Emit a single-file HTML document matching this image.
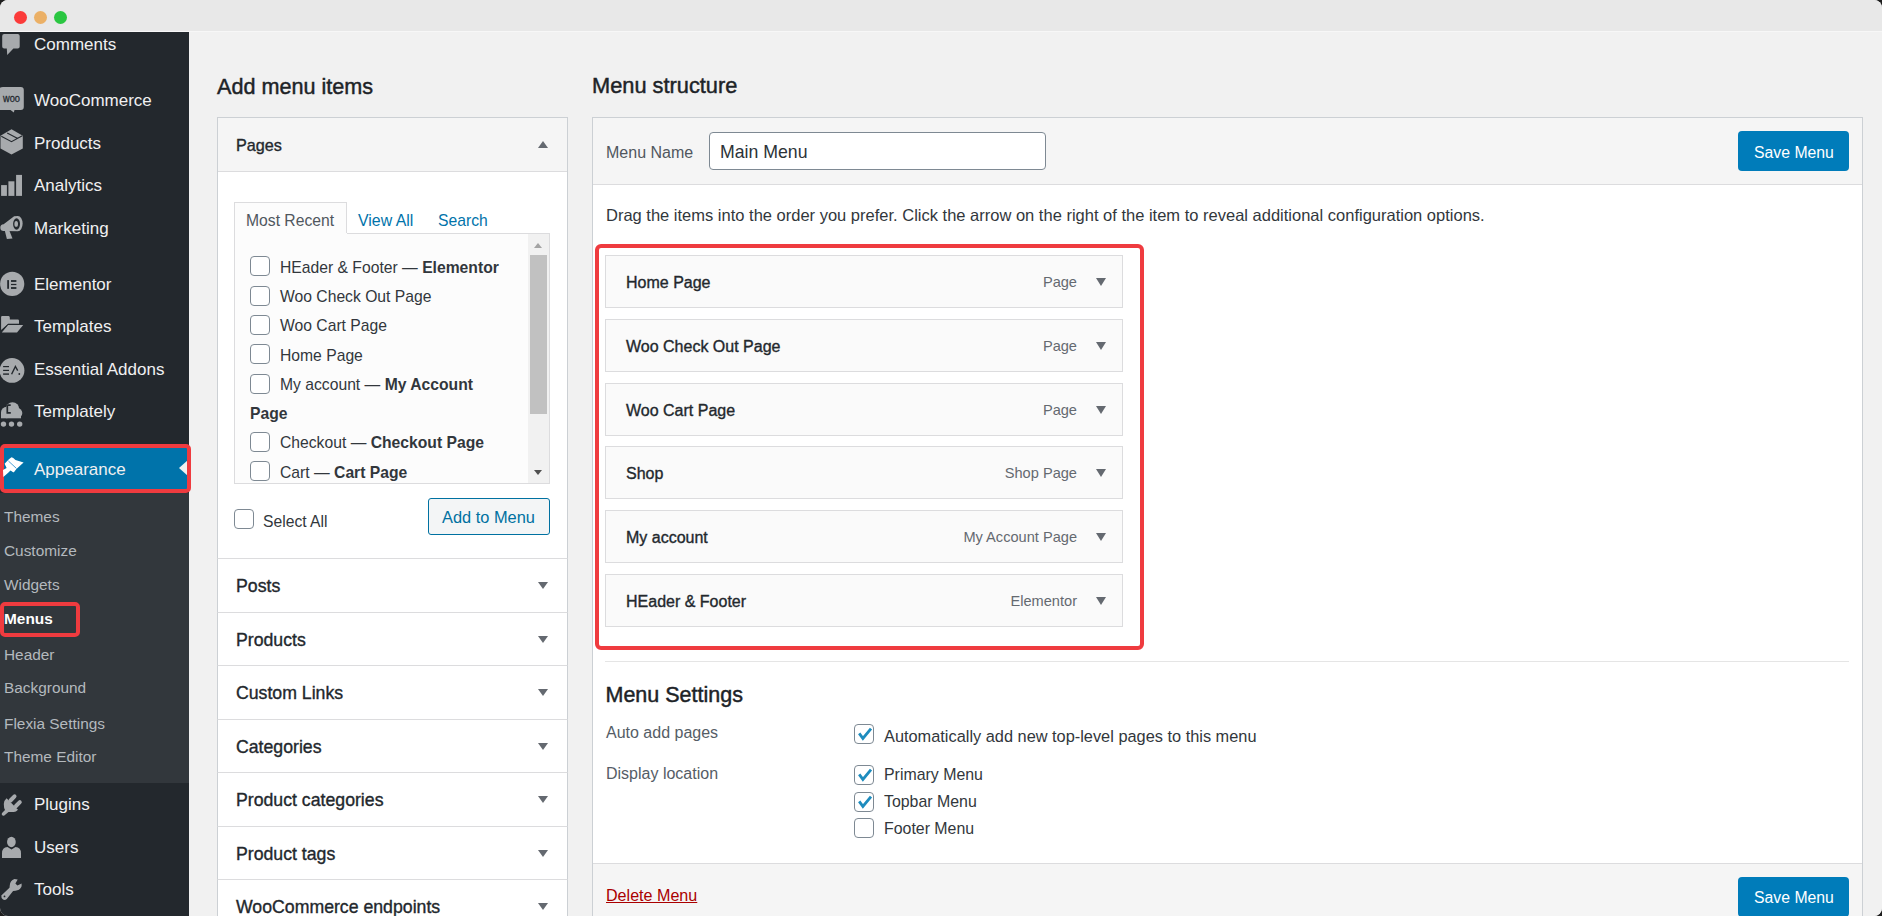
<!DOCTYPE html>
<html><head><meta charset="utf-8"><title>Menus</title>
<style>
html,body{margin:0;padding:0;}
body{width:1882px;height:916px;overflow:hidden;position:relative;background:#1e1e1e;font-family:"Liberation Sans",sans-serif;}
#win{position:absolute;left:0;top:0;width:1882px;height:916px;overflow:hidden;border-radius:8px;background:#f1f1f1;}
.r{position:absolute;box-sizing:border-box;}
.t{position:absolute;line-height:1;white-space:nowrap;}
b{font-weight:700;}
</style></head><body><div id="win">
<div class="r" style="left:0px;top:0px;width:1882px;height:32px;background:#e8e8e8;"></div>
<div class="r" style="left:0px;top:31px;width:1882px;height:1px;background:#f7f7f7;"></div>
<div class="r" style="left:13.5px;top:10.5px;width:13px;height:13px;background:#fb3b3a;border-radius:50%;"></div>
<div class="r" style="left:33.5px;top:10.5px;width:13px;height:13px;background:#ebb066;border-radius:50%;"></div>
<div class="r" style="left:53.5px;top:10.5px;width:13px;height:13px;background:#2ac641;border-radius:50%;"></div>
<div class="r" style="left:189px;top:32px;width:1693px;height:884px;background:#f1f1f1;"></div>
<div class="r" style="left:0px;top:32px;width:189px;height:884px;background:#23282d;"></div>
<div class="r" style="left:0px;top:493px;width:189px;height:290px;background:#32373c;"></div>
<div class="r" style="left:0px;top:448px;width:189px;height:41px;background:#0073aa;"></div>
<div class="r" style="left:179px;top:460px;width:0;height:0;border-top:8px solid transparent;border-bottom:8px solid transparent;border-right:9px solid #f1f1f1;"></div>
<div class="r" style="left:0px;top:444px;width:191px;height:49px;border:4px solid #ef3b3f;border-radius:5px;"></div>
<div class="r" style="left:0px;top:602px;width:80px;height:35px;border:4px solid #ef3b3f;border-radius:5px;"></div>
<svg class="r" style="left:0;top:0" width="189" height="916" viewBox="0 0 189 916">
<g fill="#a7aaad">
<path d="M4.2,34 H17.7 Q19.7,34 19.7,36 V46.4 Q19.7,48.4 17.7,48.4 H13.4 L7.2,55 L6.8,48.4 H4.2 Q2.2,48.4 2.2,46.4 V36 Q2.2,34 4.2,34 Z"/>
<path d="M3,87.1 H20.8 Q23.8,87.1 23.8,90.1 V106.9 Q23.8,109.9 20.8,109.9 H14.5 L13.8,112.5 L10.5,109.9 H-1 V90.1 Q-1,87.1 3,87.1 Z"/>
<path d="M11.5,129.3 L22.8,135.8 V148.6 L11.5,154.5 L0.5,148.6 V135.8 Z"/>
<rect x="1.1" y="185.1" width="5.8" height="10.8"/><rect x="8.4" y="181.3" width="6" height="14.6"/><rect x="16.1" y="174.9" width="5.9" height="21"/>
<path d="M3.6,224.2 L14.1,216.3 L17.9,215.9 A4.75,7.7 0 0 1 17.9,231.3 L3.8,231 A3.4,3.4 0 0 1 3.6,224.2 Z"/>
<path d="M4.9,231 L9.5,231 L12.5,238.6 L6.9,238.9 Z"/>
<circle cx="12.2" cy="283.9" r="12.1"/>
<path d="M1.1,317 Q1.1,315.9 2.2,315.9 H8.6 Q9.8,316 9.8,317.5 V319.5 H17.8 Q19,319.5 19,320.8 V324.1 H8 L1.1,330 Z"/>
<path d="M1.8,332.6 L8,324.9 H23.2 L17,332.6 Z"/>
<circle cx="12" cy="370.4" r="12.4"/>
<circle cx="6.7" cy="412.5" r="5.7"/><circle cx="12.5" cy="409" r="6.8"/><circle cx="17.2" cy="413" r="5.1"/><rect x="1" y="412.5" width="20" height="5.8"/>
<circle cx="3.5" cy="424.1" r="2.7"/><circle cx="11.5" cy="424.1" r="2.7"/><circle cx="19.7" cy="424.1" r="2.7"/>
<path d="M6.6,798.2 L18,809.7 Q16,812 13.8,812 L8.5,812 L4,815.8 Q2.5,816 1.8,814.8 Q1.5,813.5 2.5,812.5 L5,810 Q3.8,808 3.8,804 Q3.8,800.5 6.6,798.2 Z"/>
<ellipse cx="11.4" cy="841.9" rx="4.35" ry="5.25"/>
<path d="M2,857.9 V853.5 Q2,847 7.5,847 L11.5,849.5 L15.5,847 Q21,847 21,853.5 V857.9 Z"/>
<path d="M14.4,878.9 L17.7,879.6 L15.4,883.5 L17.4,885.5 L21.6,883.5 Q21.8,886 21.3,887.1 Q19.5,890.5 15.5,890.8 L13.1,891 L6.8,898.9 Q5,900.5 3,899.5 Q1,898 1.3,895.5 L9.5,887.8 L9.8,885 Q10.2,880.5 14.4,878.9 Z"/>
</g>
<g stroke="#a7aaad" stroke-width="4" stroke-linecap="round" fill="none">
<path d="M10.5,800.5 L14.5,796.3 M16,806 L19.8,802.2"/>
</g>
<g fill="#23282d">
<text x="3" y="101.6" font-family="Liberation Sans" font-size="11.5" textLength="17" lengthAdjust="spacingAndGlyphs" stroke="#23282d" stroke-width="0.3">woo</text>
<ellipse cx="16.55" cy="224" rx="3.45" ry="5.75"/>
<rect x="7.2" y="280.1" width="1.8" height="8.7"/><rect x="11" y="280.1" width="5.4" height="1.8"/><rect x="11" y="283.9" width="5.4" height="1.2"/><rect x="11" y="287.1" width="5.4" height="1.8"/>
<rect x="3.1" y="366" width="5.9" height="1.2"/><rect x="3.1" y="369.8" width="5.9" height="1.2"/><rect x="3.1" y="373.4" width="5.9" height="1.4"/>
<circle cx="19.3" cy="374" r="0.9"/>
<circle cx="4.5" cy="896.4" r="0.9"/>
</g>
<ellipse cx="16.2" cy="223.9" rx="1.8" ry="2.95" fill="#a7aaad"/>
<g stroke="#23282d" fill="none">
<path d="M1.3,136.2 L11.5,141.7 L22.3,135.8 M7.2,132.9 L17.7,138.5" stroke-width="1.1"/>
<path d="M11.6,374.3 L15.4,366.5 L17.7,370.7" stroke-width="1.4"/>
<path d="M7.3,405.2 V412.8 H10.8 M7.3,405.2 H10.7" stroke-width="1.7"/>
<path d="M1.5,331.5 L8,324.2 H23" stroke-width="0.9"/>
</g>
<path d="M11.5,457.3 Q13,457.5 15.5,460 L23.6,462.5 L16.4,469.1 L14.1,472 Q13.5,472.5 12.8,472 L10.5,470.4 L8.2,472.7 L3.3,476.9 L3,470 L6.6,468.1 L4.6,463.8 L8.9,459.2 Z" fill="#fff"/>
<path d="M8.4,461 L16.4,468.4" stroke="#4aa0d5" stroke-width="1"/>
</svg>
<div class="t" style="left:34px;top:36.41px;font-size:17px;color:#f0f0f1;font-weight:400;">Comments</div>
<div class="t" style="left:34px;top:92.21px;font-size:17px;color:#f0f0f1;font-weight:400;">WooCommerce</div>
<div class="t" style="left:34px;top:135.41px;font-size:17px;color:#f0f0f1;font-weight:400;">Products</div>
<div class="t" style="left:34px;top:177.31px;font-size:17px;color:#f0f0f1;font-weight:400;">Analytics</div>
<div class="t" style="left:34px;top:220.31px;font-size:17px;color:#f0f0f1;font-weight:400;">Marketing</div>
<div class="t" style="left:34px;top:276.21px;font-size:17px;color:#f0f0f1;font-weight:400;">Elementor</div>
<div class="t" style="left:34px;top:318.01px;font-size:17px;color:#f0f0f1;font-weight:400;">Templates</div>
<div class="t" style="left:34px;top:361.11px;font-size:17px;color:#f0f0f1;font-weight:400;">Essential Addons</div>
<div class="t" style="left:34px;top:402.61px;font-size:17px;color:#f0f0f1;font-weight:400;">Templately</div>
<div class="t" style="left:34px;top:460.61px;font-size:17px;color:#f0f0f1;font-weight:400;">Appearance</div>
<div class="t" style="left:34px;top:796.41px;font-size:17px;color:#f0f0f1;font-weight:400;">Plugins</div>
<div class="t" style="left:34px;top:839.41px;font-size:17px;color:#f0f0f1;font-weight:400;">Users</div>
<div class="t" style="left:34px;top:881.41px;font-size:17px;color:#f0f0f1;font-weight:400;">Tools</div>
<div class="t" style="left:4px;top:508.76px;font-size:15.4px;color:#b4b9be;font-weight:400;">Themes</div>
<div class="t" style="left:4px;top:542.76px;font-size:15.4px;color:#b4b9be;font-weight:400;">Customize</div>
<div class="t" style="left:4px;top:577.36px;font-size:15.4px;color:#b4b9be;font-weight:400;">Widgets</div>
<div class="t" style="left:4px;top:611.46px;font-size:15.4px;color:#ffffff;font-weight:700;">Menus</div>
<div class="t" style="left:4px;top:646.76px;font-size:15.4px;color:#b4b9be;font-weight:400;">Header</div>
<div class="t" style="left:4px;top:680.46px;font-size:15.4px;color:#b4b9be;font-weight:400;">Background</div>
<div class="t" style="left:4px;top:715.56px;font-size:15.4px;color:#b4b9be;font-weight:400;">Flexia Settings</div>
<div class="t" style="left:4px;top:749.46px;font-size:15.4px;color:#b4b9be;font-weight:400;">Theme Editor</div>
<div class="t" style="left:217px;top:75.62px;font-size:21.6px;color:#1d2327;font-weight:400;-webkit-text-stroke:0.45px #1d2327;">Add menu items</div>
<div class="r" style="left:217px;top:117px;width:351px;height:442px;background:#fff;border:1px solid #ccd0d4;border-bottom:none;"></div>
<div class="r" style="left:218px;top:118px;width:349px;height:54px;background:#f5f5f5;border-bottom:1px solid #dcdcde;"></div>
<div class="t" style="left:236px;top:137.09px;font-size:16.2px;color:#23282d;font-weight:400;-webkit-text-stroke:0.35px #23282d;">Pages</div>
<div class="r" style="left:538px;top:141px;width:0;height:0;border-left:5px solid transparent;border-right:5px solid transparent;border-bottom:7px solid #646970;"></div>
<div class="r" style="left:234px;top:202px;width:113px;height:32px;background:#fcfcfc;border:1px solid #dcdcde;border-bottom:none;"></div>
<div class="t" style="left:246px;top:212.91px;font-size:15.7px;color:#50575e;font-weight:400;">Most Recent</div>
<div class="t" style="left:358px;top:212.74px;font-size:15.9px;color:#0073aa;font-weight:400;">View All</div>
<div class="t" style="left:438px;top:212.91px;font-size:15.7px;color:#0073aa;font-weight:400;">Search</div>
<div class="r" style="left:234px;top:233px;width:316px;height:251px;background:#fcfcfc;border:1px solid #dcdcde;border-top:none;"></div>
<div class="r" style="left:347px;top:233px;width:203px;height:1px;background:#dcdcde;"></div>
<div class="r" style="left:528px;top:234px;width:21px;height:249px;background:#f1f1f1;"></div>
<div class="r" style="left:530px;top:255px;width:17px;height:159px;background:#c1c1c1;"></div>
<div class="r" style="left:534px;top:243px;width:0;height:0;border-left:4.5px solid transparent;border-right:4.5px solid transparent;border-bottom:5px solid #a3a3a3;"></div>
<div class="r" style="left:534px;top:470px;width:0;height:0;border-left:4.5px solid transparent;border-right:4.5px solid transparent;border-top:5px solid #505050;"></div>
<div class="r" style="left:250px;top:256.29999999999995px;width:20px;height:20px;background:#fff;border:1px solid #7e8993;border-radius:4px;"></div>
<div class="t" style="left:280px;top:259.61px;font-size:15.7px;color:#32373c;font-weight:400;">HEader &amp; Footer — <b>Elementor</b></div>
<div class="r" style="left:250px;top:285.59999999999997px;width:20px;height:20px;background:#fff;border:1px solid #7e8993;border-radius:4px;"></div>
<div class="t" style="left:280px;top:288.91px;font-size:15.7px;color:#32373c;font-weight:400;">Woo Check Out Page</div>
<div class="r" style="left:250px;top:314.9px;width:20px;height:20px;background:#fff;border:1px solid #7e8993;border-radius:4px;"></div>
<div class="t" style="left:280px;top:318.21px;font-size:15.7px;color:#32373c;font-weight:400;">Woo Cart Page</div>
<div class="r" style="left:250px;top:344.2px;width:20px;height:20px;background:#fff;border:1px solid #7e8993;border-radius:4px;"></div>
<div class="t" style="left:280px;top:347.51px;font-size:15.7px;color:#32373c;font-weight:400;">Home Page</div>
<div class="r" style="left:250px;top:373.5px;width:20px;height:20px;background:#fff;border:1px solid #7e8993;border-radius:4px;"></div>
<div class="t" style="left:280px;top:376.81px;font-size:15.7px;color:#32373c;font-weight:400;">My account — <b>My Account</b></div>
<div class="t" style="left:250px;top:406.11px;font-size:15.7px;color:#32373c;font-weight:400;"><b>Page</b></div>
<div class="r" style="left:250px;top:432.09999999999997px;width:20px;height:20px;background:#fff;border:1px solid #7e8993;border-radius:4px;"></div>
<div class="t" style="left:280px;top:435.41px;font-size:15.7px;color:#32373c;font-weight:400;">Checkout — <b>Checkout Page</b></div>
<div class="r" style="left:250px;top:461.4px;width:20px;height:20px;background:#fff;border:1px solid #7e8993;border-radius:4px;"></div>
<div class="t" style="left:280px;top:464.71px;font-size:15.7px;color:#32373c;font-weight:400;">Cart — <b>Cart Page</b></div>
<div class="r" style="left:234px;top:509px;width:20px;height:20px;background:#fff;border:1px solid #7e8993;border-radius:4px;"></div>
<div class="t" style="left:263px;top:513.71px;font-size:15.7px;color:#32373c;font-weight:400;">Select All</div>
<div class="r" style="left:428px;top:498px;width:122px;height:37px;background:#f3f5f6;border:1px solid #0071a1;border-radius:3px;"></div>
<div class="t" style="left:442px;top:508.92px;font-size:16.4px;color:#0071a1;font-weight:400;">Add to Menu</div>
<div class="r" style="left:217px;top:558px;width:351px;height:54px;background:#fff;border:1px solid #ccd0d4;border-top-color:#dcdcde;border-bottom:none;"></div>
<div class="t" style="left:236px;top:578.02px;font-size:17.7px;color:#23282d;font-weight:400;-webkit-text-stroke:0.35px #23282d;">Posts</div>
<div class="r" style="left:538px;top:582px;width:0;height:0;border-left:5px solid transparent;border-right:5px solid transparent;border-top:7px solid #646970;"></div>
<div class="r" style="left:217px;top:612px;width:351px;height:54px;background:#fff;border:1px solid #ccd0d4;border-top-color:#dcdcde;border-bottom:none;"></div>
<div class="t" style="left:236px;top:632.02px;font-size:17.7px;color:#23282d;font-weight:400;-webkit-text-stroke:0.35px #23282d;">Products</div>
<div class="r" style="left:538px;top:636px;width:0;height:0;border-left:5px solid transparent;border-right:5px solid transparent;border-top:7px solid #646970;"></div>
<div class="r" style="left:217px;top:665px;width:351px;height:54px;background:#fff;border:1px solid #ccd0d4;border-top-color:#dcdcde;border-bottom:none;"></div>
<div class="t" style="left:236px;top:685.02px;font-size:17.7px;color:#23282d;font-weight:400;-webkit-text-stroke:0.35px #23282d;">Custom Links</div>
<div class="r" style="left:538px;top:689px;width:0;height:0;border-left:5px solid transparent;border-right:5px solid transparent;border-top:7px solid #646970;"></div>
<div class="r" style="left:217px;top:719px;width:351px;height:54px;background:#fff;border:1px solid #ccd0d4;border-top-color:#dcdcde;border-bottom:none;"></div>
<div class="t" style="left:236px;top:739.02px;font-size:17.7px;color:#23282d;font-weight:400;-webkit-text-stroke:0.35px #23282d;">Categories</div>
<div class="r" style="left:538px;top:743px;width:0;height:0;border-left:5px solid transparent;border-right:5px solid transparent;border-top:7px solid #646970;"></div>
<div class="r" style="left:217px;top:772px;width:351px;height:54px;background:#fff;border:1px solid #ccd0d4;border-top-color:#dcdcde;border-bottom:none;"></div>
<div class="t" style="left:236px;top:792.02px;font-size:17.7px;color:#23282d;font-weight:400;-webkit-text-stroke:0.35px #23282d;">Product categories</div>
<div class="r" style="left:538px;top:796px;width:0;height:0;border-left:5px solid transparent;border-right:5px solid transparent;border-top:7px solid #646970;"></div>
<div class="r" style="left:217px;top:826px;width:351px;height:54px;background:#fff;border:1px solid #ccd0d4;border-top-color:#dcdcde;border-bottom:none;"></div>
<div class="t" style="left:236px;top:846.02px;font-size:17.7px;color:#23282d;font-weight:400;-webkit-text-stroke:0.35px #23282d;">Product tags</div>
<div class="r" style="left:538px;top:850px;width:0;height:0;border-left:5px solid transparent;border-right:5px solid transparent;border-top:7px solid #646970;"></div>
<div class="r" style="left:217px;top:879px;width:351px;height:54px;background:#fff;border:1px solid #ccd0d4;border-top-color:#dcdcde;border-bottom:none;"></div>
<div class="t" style="left:236px;top:899.02px;font-size:17.7px;color:#23282d;font-weight:400;-webkit-text-stroke:0.35px #23282d;">WooCommerce endpoints</div>
<div class="r" style="left:538px;top:903px;width:0;height:0;border-left:5px solid transparent;border-right:5px solid transparent;border-top:7px solid #646970;"></div>
<div class="t" style="left:592px;top:75.25px;font-size:21.8px;color:#1d2327;font-weight:400;-webkit-text-stroke:0.45px #1d2327;">Menu structure</div>
<div class="r" style="left:592px;top:117px;width:1271px;height:830px;background:#fff;border:1px solid #ccd0d4;"></div>
<div class="r" style="left:593px;top:118px;width:1269px;height:67px;background:#f5f5f5;border-bottom:1px solid #dcdcde;"></div>
<div class="t" style="left:606px;top:144.66px;font-size:16px;color:#50575e;font-weight:400;">Menu Name</div>
<div class="r" style="left:709px;top:132px;width:337px;height:38px;background:#fff;border:1px solid #7e8993;border-radius:4px;"></div>
<div class="t" style="left:720px;top:144.12px;font-size:17.7px;color:#2c3338;font-weight:400;">Main Menu</div>
<div class="r" style="left:1738px;top:131px;width:111px;height:40px;background:#007cba;border-radius:4px;"></div>
<div class="t" style="left:1754px;top:145.23px;font-size:15.8px;color:#ffffff;font-weight:400;">Save Menu</div>
<div class="t" style="left:606px;top:206.63px;font-size:16.5px;color:#32373c;font-weight:400;">Drag the items into the order you prefer. Click the arrow on the right of the item to reveal additional configuration options.</div>
<div class="r" style="left:605px;top:255px;width:518px;height:53px;background:#fafafa;border:1px solid #dcdcde;"></div>
<div class="t" style="left:626px;top:274.76px;font-size:16px;color:#23282d;font-weight:400;-webkit-text-stroke:0.35px #23282d;">Home Page</div>
<div class="t" style="right:805px;top:275.14px;font-size:14.6px;color:#646970;">Page</div>
<div class="r" style="left:1096px;top:277.5px;width:0;height:0;border-left:5px solid transparent;border-right:5px solid transparent;border-top:8px solid #646970;"></div>
<div class="r" style="left:605px;top:319px;width:518px;height:53px;background:#fafafa;border:1px solid #dcdcde;"></div>
<div class="t" style="left:626px;top:338.76px;font-size:16px;color:#23282d;font-weight:400;-webkit-text-stroke:0.35px #23282d;">Woo Check Out Page</div>
<div class="t" style="right:805px;top:339.14px;font-size:14.6px;color:#646970;">Page</div>
<div class="r" style="left:1096px;top:341.5px;width:0;height:0;border-left:5px solid transparent;border-right:5px solid transparent;border-top:8px solid #646970;"></div>
<div class="r" style="left:605px;top:383px;width:518px;height:53px;background:#fafafa;border:1px solid #dcdcde;"></div>
<div class="t" style="left:626px;top:402.76px;font-size:16px;color:#23282d;font-weight:400;-webkit-text-stroke:0.35px #23282d;">Woo Cart Page</div>
<div class="t" style="right:805px;top:403.14px;font-size:14.6px;color:#646970;">Page</div>
<div class="r" style="left:1096px;top:405.5px;width:0;height:0;border-left:5px solid transparent;border-right:5px solid transparent;border-top:8px solid #646970;"></div>
<div class="r" style="left:605px;top:446px;width:518px;height:53px;background:#fafafa;border:1px solid #dcdcde;"></div>
<div class="t" style="left:626px;top:465.76px;font-size:16px;color:#23282d;font-weight:400;-webkit-text-stroke:0.35px #23282d;">Shop</div>
<div class="t" style="right:805px;top:466.14px;font-size:14.6px;color:#646970;">Shop Page</div>
<div class="r" style="left:1096px;top:468.5px;width:0;height:0;border-left:5px solid transparent;border-right:5px solid transparent;border-top:8px solid #646970;"></div>
<div class="r" style="left:605px;top:510px;width:518px;height:53px;background:#fafafa;border:1px solid #dcdcde;"></div>
<div class="t" style="left:626px;top:529.76px;font-size:16px;color:#23282d;font-weight:400;-webkit-text-stroke:0.35px #23282d;">My account</div>
<div class="t" style="right:805px;top:530.14px;font-size:14.6px;color:#646970;">My Account Page</div>
<div class="r" style="left:1096px;top:532.5px;width:0;height:0;border-left:5px solid transparent;border-right:5px solid transparent;border-top:8px solid #646970;"></div>
<div class="r" style="left:605px;top:574px;width:518px;height:53px;background:#fafafa;border:1px solid #dcdcde;"></div>
<div class="t" style="left:626px;top:593.76px;font-size:16px;color:#23282d;font-weight:400;-webkit-text-stroke:0.35px #23282d;">HEader &amp; Footer</div>
<div class="t" style="right:805px;top:594.14px;font-size:14.6px;color:#646970;">Elementor</div>
<div class="r" style="left:1096px;top:596.5px;width:0;height:0;border-left:5px solid transparent;border-right:5px solid transparent;border-top:8px solid #646970;"></div>
<div class="r" style="left:595px;top:244px;width:549px;height:406px;border:4px solid #ef3b3f;border-radius:6px;"></div>
<div class="r" style="left:605px;top:661px;width:1244px;height:1px;background:#e5e5e5;"></div>
<div class="t" style="left:605.5px;top:685.20px;font-size:21.5px;color:#1d2327;font-weight:400;-webkit-text-stroke:0.45px #1d2327;">Menu Settings</div>
<div class="t" style="left:606px;top:725.26px;font-size:16px;color:#555d66;font-weight:400;">Auto add pages</div>
<div class="t" style="left:606px;top:766.06px;font-size:16px;color:#555d66;font-weight:400;">Display location</div>
<div class="r" style="left:854px;top:724px;width:20px;height:20px;background:#fff;border:1px solid #7e8993;border-radius:4px;"></div>
<svg class="r" style="left:854px;top:724px" width="22" height="22" viewBox="0 0 22 22"><path d="M5.2,9.4 L8.9,14.4 L17,4.6" fill="none" stroke="#1e8cbe" stroke-width="2.8" stroke-linejoin="miter"/></svg>
<div class="t" style="left:884px;top:728.06px;font-size:16.35px;color:#32373c;font-weight:400;">Automatically add new top-level pages to this menu</div>
<div class="r" style="left:854px;top:764.5px;width:20px;height:20px;background:#fff;border:1px solid #7e8993;border-radius:4px;"></div>
<svg class="r" style="left:854px;top:764.5px" width="22" height="22" viewBox="0 0 22 22"><path d="M5.2,9.4 L8.9,14.4 L17,4.6" fill="none" stroke="#1e8cbe" stroke-width="2.8" stroke-linejoin="miter"/></svg>
<div class="t" style="left:884px;top:767.24px;font-size:15.9px;color:#32373c;font-weight:400;">Primary Menu</div>
<div class="r" style="left:854px;top:791.7px;width:20px;height:20px;background:#fff;border:1px solid #7e8993;border-radius:4px;"></div>
<svg class="r" style="left:854px;top:791.7px" width="22" height="22" viewBox="0 0 22 22"><path d="M5.2,9.4 L8.9,14.4 L17,4.6" fill="none" stroke="#1e8cbe" stroke-width="2.8" stroke-linejoin="miter"/></svg>
<div class="t" style="left:884px;top:794.44px;font-size:15.9px;color:#32373c;font-weight:400;">Topbar Menu</div>
<div class="r" style="left:854px;top:818.4px;width:20px;height:20px;background:#fff;border:1px solid #7e8993;border-radius:4px;"></div>
<div class="t" style="left:884px;top:820.84px;font-size:15.9px;color:#32373c;font-weight:400;">Footer Menu</div>
<div class="r" style="left:593px;top:863px;width:1269px;height:60px;background:#f5f5f5;border-top:1px solid #dcdcde;"></div>
<div class="t" style="left:606px;top:887.37px;font-size:16.1px;color:#a00;font-weight:400;text-decoration:underline;">Delete Menu</div>
<div class="r" style="left:1738px;top:877px;width:111px;height:40px;background:#007cba;border-radius:4px;"></div>
<div class="t" style="left:1754px;top:889.83px;font-size:15.8px;color:#ffffff;font-weight:400;">Save Menu</div>
</div></body></html>
